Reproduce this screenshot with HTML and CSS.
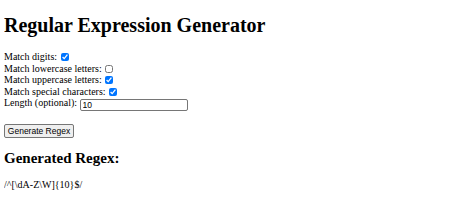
FILE: index.html
```html
<!DOCTYPE html>
<html lang="en">
<head>
    <meta charset="UTF-8">
    <meta name="viewport" content="width=device-width, initial-scale=1.0">
    <title>Regular Expression Generator</title>
    <link rel="stylesheet" href="styles.css">
</head>
<body>
    <h1>Regular Expression Generator</h1>

    <div class="options">
        <label>Match digits: <input type="checkbox" id="digits" checked></label><br>
        <label>Match lowercase letters: <input type="checkbox" id="lowercase"></label><br>
        <label>Match uppercase letters: <input type="checkbox" id="uppercase" checked></label><br>
        <label>Match special characters: <input type="checkbox" id="special" checked></label><br>
        <label>Length (optional): <input type="text" id="length" value="10"></label>
    </div>

    <button class="generate" onclick="generateRegex()">Generate Regex</button>

    <h2>Generated Regex:</h2>
    <p class="result" id="result">/^[\dA-Z\W]{10}$/</p>

    <script>
        function generateRegex() {
            var parts = '';
            if (document.getElementById('digits').checked) parts += '\\d';
            if (document.getElementById('lowercase').checked) parts += 'a-z';
            if (document.getElementById('uppercase').checked) parts += 'A-Z';
            if (document.getElementById('special').checked) parts += '\\W';
            var len = document.getElementById('length').value;
            var count = len ? '{' + len + '}' : '+';
            document.getElementById('result').textContent = '/^[' + parts + ']' + count + '$/';
        }
    </script>
</body>
</html>
```

FILE: styles.css
```css
body {
    font-family: "Liberation Serif", "Times New Roman", serif;
    font-size: 10px;
    margin: 5px 4px;
    color: #000;
    background: #fff;
}

h1 {
    font-size: 20px;
    margin: 9px 0 14px 0;
}

.options {
    line-height: 11.5px;
}

.options input[type="checkbox"] {
    width: 8px;
    height: 8px;
    margin: 0 1px;
    vertical-align: -1px;
    accent-color: #0075ff;
}

.options input[type="text"] {
    box-sizing: border-box;
    width: 108px;
    height: 12px;
    padding: 0 2px;
    font-family: "Liberation Sans", Arial, sans-serif;
    font-size: 8.5px;
    border: 1px solid #767676;
    border-radius: 2px;
    margin: 1px 0 0 0;
    vertical-align: -2px;
}

.generate {
    display: block;
    box-sizing: border-box;
    width: 70px;
    height: 14px;
    margin-top: 13px;
    padding: 0;
    font-family: "Liberation Sans", Arial, sans-serif;
    font-size: 8.5px;
    background: #efefef;
    border: 1px solid #767676;
    border-radius: 2px;
}

h2 {
    font-size: 15px;
    margin: 12px 0 12px 0;
}

.result {
    margin: 0;
    line-height: 11.5px;
}
```
